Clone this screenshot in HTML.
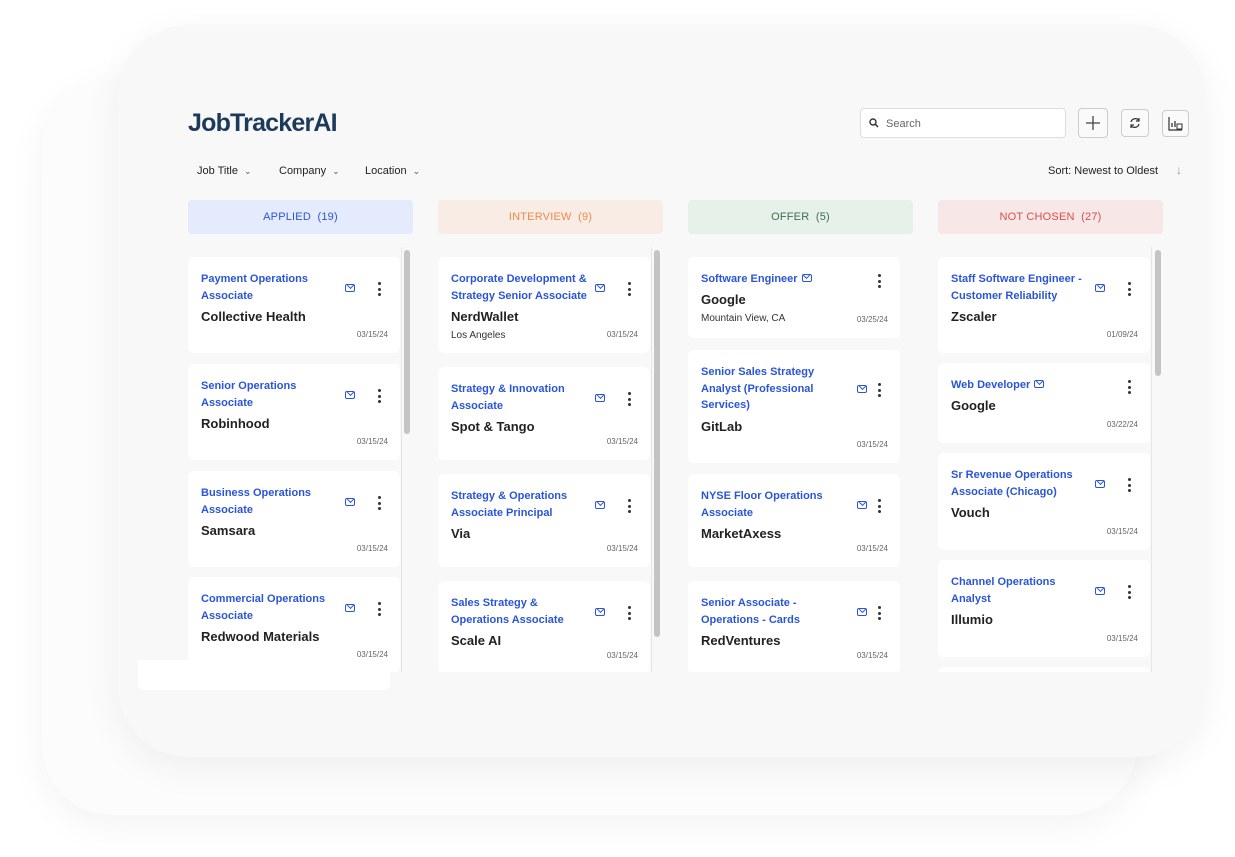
<!DOCTYPE html>
<html><head><meta charset="utf-8"><style>
*{box-sizing:border-box;margin:0;padding:0}
body{width:1235px;height:857px;background:#fff;font-family:"Liberation Sans",sans-serif;position:relative;overflow:hidden}
.back{position:absolute;left:42px;top:80px;width:1095px;height:735px;border-radius:70px;background:#fcfcfc;box-shadow:0 10px 40px rgba(0,0,0,.05)}
.front{position:absolute;left:118px;top:25px;width:1087px;height:732px;border-radius:70px;background:#f8f8f8;box-shadow:0 10px 40px rgba(0,0,0,.06);overflow:hidden}
.a{position:absolute}
.logo{left:188px;top:109px;font-size:25px;font-weight:bold;color:#1b3a5c;letter-spacing:-0.8px}
.filt{top:165px;font-size:11px;color:#222}
.filt span{font-size:9px;color:#555;margin-left:6px}
.search{left:860px;top:108px;width:206px;height:30px;border:1px solid #ddd;border-radius:4px;background:#fff;font-size:11px;color:#666;padding:9px 0 0 25px}
.btn{top:108px;width:30px;height:30px;border:1px solid #ccc;border-radius:4px;background:#fafafa}
.hdr{top:200px;width:225px;height:34px;border-radius:4px;font-size:11px;text-align:center;line-height:34px;letter-spacing:.2px}
.clip{position:absolute;left:0;top:0;width:1235px;height:672px;overflow:hidden}
.card{position:absolute;width:212px;background:#fff;border-radius:6px;padding:14px 0 0 13px}
.row{display:flex;align-items:center}
.t{font-size:11px;font-weight:bold;color:#2a55d9;line-height:16.5px;width:140px}
.ic{width:10px;height:8px;border:1.2px solid #2a55d9;border-radius:2px;position:relative;margin-left:3px;display:inline-block}
.ic:after{content:"";position:absolute;left:1.5px;top:-2px;width:4px;height:4px;border-right:1.2px solid #2a55d9;border-bottom:1.2px solid #2a55d9;transform:rotate(45deg)}
.dots{position:absolute;right:19px;width:3px}
.dots i{display:block;width:3px;height:3px;border-radius:50%;background:#333;margin-bottom:2.5px}
.c{font-size:13px;font-weight:bold;color:#222;margin-top:5px}
.l{font-size:10px;color:#333;margin-top:6px}
.d{position:absolute;right:12px;bottom:14px;font-size:8px;color:#666}
.sb{position:absolute;width:6px;border-radius:3px;background:#c4c4c4}
.trk{position:absolute;width:1px;background:#e6e6e6}
</style></head><body>
<div class="back"></div>
<div class="front"></div>
<div class="a" style="left:138px;top:660px;width:252px;height:30px;background:#fff;border-radius:0 0 6px 6px"></div>
<div class="a logo">JobTrackerAI</div>
<div class="a filt" style="left:197px">Job Title<span>&#8964;</span></div>
<div class="a filt" style="left:279px">Company<span>&#8964;</span></div>
<div class="a filt" style="left:365px">Location<span>&#8964;</span></div>
<div class="a filt" style="left:1048px">Sort: Newest to Oldest</div>
<div class="a" style="left:1176px;top:163px;font-size:12px;color:#999">&#8595;</div>
<div class="a search">Search</div>
<svg class="a" style="left:869px;top:118px" width="10" height="10" viewBox="0 0 10 10"><circle cx="4" cy="4" r="3" fill="none" stroke="#333" stroke-width="1.4"/><path d="M6.2 6.2L9 9" stroke="#333" stroke-width="1.5"/></svg>
<div class="a btn" style="left:1078px"><svg width="28" height="28"><path d="M14 7v14M7 14h14" stroke="#444" stroke-width="1.3"/></svg></div>
<div class="a btn" style="left:1121px;width:28px;height:28px;top:109px"><svg width="26" height="26"><path d="M9 12a4.5 4.5 0 0 1 8-1.5M17 14a4.5 4.5 0 0 1-8 1.5" fill="none" stroke="#333" stroke-width="1.3"/><path d="M17 8v3h-3M9 18v-3h3" fill="none" stroke="#333" stroke-width="1.2"/></svg></div>
<div class="a btn" style="left:1162px;width:27px;height:27px;top:110px"><svg width="25" height="25"><path d="M6 6v13h13" fill="none" stroke="#333" stroke-width="1.2"/><path d="M9 16v-4M12 16v-6" stroke="#333" stroke-width="1.3"/><rect x="14" y="13" width="5" height="5" fill="none" stroke="#333"/></svg></div>

<div class="a hdr" style="left:188px;background:#e3ebfc;color:#2a55d9">APPLIED &nbsp;(19)</div>
<div class="a hdr" style="left:438px;background:#f8ece4;color:#ef8a4e">INTERVIEW &nbsp;(9)</div>
<div class="a hdr" style="left:688px;background:#e6f1ea;color:#3e6e50">OFFER &nbsp;(5)</div>
<div class="a hdr" style="left:938px;background:#f7e7e6;color:#db4d4d">NOT CHOSEN &nbsp;(27)</div>

<div class="clip">
<div class="trk" style="left:401px;top:247px;height:430px"></div><div class="sb" style="left:404px;top:250px;height:184px"></div>
<div class="trk" style="left:651px;top:247px;height:430px"></div><div class="sb" style="left:654px;top:250px;height:387px"></div>
<div class="trk" style="left:1151px;top:247px;height:430px"></div><div class="sb" style="left:1155px;top:250px;height:126px"></div>

<div class="card" style="left:188px;top:257px;height:96px"><div class="row"><div class="t">Payment Operations Associate</div><span class="ic" style="margin-left:4px"></span></div><div class="dots" style="top:25px"><i></i><i></i><i></i></div><div class="c">Collective Health</div><div class="d">03/15/24</div></div>
<div class="card" style="left:188px;top:364px;height:96px"><div class="row"><div class="t">Senior Operations Associate</div><span class="ic" style="margin-left:4px"></span></div><div class="dots" style="top:25px"><i></i><i></i><i></i></div><div class="c">Robinhood</div><div class="d">03/15/24</div></div>
<div class="card" style="left:188px;top:471px;height:96px"><div class="row"><div class="t">Business Operations Associate</div><span class="ic" style="margin-left:4px"></span></div><div class="dots" style="top:25px"><i></i><i></i><i></i></div><div class="c">Samsara</div><div class="d">03/15/24</div></div>
<div class="card" style="left:188px;top:577px;height:96px"><div class="row"><div class="t">Commercial Operations Associate</div><span class="ic" style="margin-left:4px"></span></div><div class="dots" style="top:25px"><i></i><i></i><i></i></div><div class="c">Redwood Materials</div><div class="d">03/15/24</div></div>

<div class="card" style="left:438px;top:257px;height:96px"><div class="row"><div class="t">Corporate Development &amp; Strategy Senior Associate</div><span class="ic" style="margin-left:4px"></span></div><div class="dots" style="top:25px"><i></i><i></i><i></i></div><div class="c">NerdWallet</div><div class="l">Los Angeles</div><div class="d">03/15/24</div></div>
<div class="card" style="left:438px;top:367px;height:93px"><div class="row"><div class="t">Strategy &amp; Innovation Associate</div><span class="ic" style="margin-left:4px"></span></div><div class="dots" style="top:25px"><i></i><i></i><i></i></div><div class="c">Spot &amp; Tango</div><div class="d">03/15/24</div></div>
<div class="card" style="left:438px;top:474px;height:93px"><div class="row"><div class="t">Strategy &amp; Operations Associate Principal</div><span class="ic" style="margin-left:4px"></span></div><div class="dots" style="top:25px"><i></i><i></i><i></i></div><div class="c">Via</div><div class="d">03/15/24</div></div>
<div class="card" style="left:438px;top:581px;height:93px"><div class="row"><div class="t">Sales Strategy &amp; Operations Associate</div><span class="ic" style="margin-left:4px"></span></div><div class="dots" style="top:25px"><i></i><i></i><i></i></div><div class="c">Scale AI</div><div class="d">03/15/24</div></div>

<div class="card" style="left:688px;top:257px;height:81px"><div class="t" style="width:auto">Software Engineer <span class="ic" style="margin-left:1px"></span></div><div class="dots" style="top:17px"><i></i><i></i><i></i></div><div class="c" style="margin-top:4px">Google</div><div class="l">Mountain View, CA</div><div class="d">03/25/24</div></div>
<div class="card" style="left:688px;top:350px;height:113px"><div class="row"><div class="t">Senior Sales Strategy Analyst (Professional Services)</div><span class="ic" style="margin-left:16px"></span></div><div class="dots" style="top:33px"><i></i><i></i><i></i></div><div class="c">GitLab</div><div class="d">03/15/24</div></div>
<div class="card" style="left:688px;top:474px;height:93px"><div class="row"><div class="t">NYSE Floor Operations Associate</div><span class="ic" style="margin-left:16px"></span></div><div class="dots" style="top:25px"><i></i><i></i><i></i></div><div class="c">MarketAxess</div><div class="d">03/15/24</div></div>
<div class="card" style="left:688px;top:581px;height:93px"><div class="row"><div class="t">Senior Associate - Operations - Cards</div><span class="ic" style="margin-left:16px"></span></div><div class="dots" style="top:25px"><i></i><i></i><i></i></div><div class="c">RedVentures</div><div class="d">03/15/24</div></div>

<div class="card" style="left:938px;top:257px;height:96px"><div class="row"><div class="t">Staff Software Engineer - Customer Reliability</div><span class="ic" style="margin-left:4px"></span></div><div class="dots" style="top:25px"><i></i><i></i><i></i></div><div class="c">Zscaler</div><div class="d">01/09/24</div></div>
<div class="card" style="left:938px;top:363px;height:80px"><div class="t" style="width:auto">Web Developer <span class="ic" style="margin-left:1px"></span></div><div class="dots" style="top:17px"><i></i><i></i><i></i></div><div class="c" style="margin-top:4px">Google</div><div class="d">03/22/24</div></div>
<div class="card" style="left:938px;top:453px;height:97px"><div class="row"><div class="t">Sr Revenue Operations Associate (Chicago)</div><span class="ic" style="margin-left:4px"></span></div><div class="dots" style="top:25px"><i></i><i></i><i></i></div><div class="c">Vouch</div><div class="d">03/15/24</div></div>
<div class="card" style="left:938px;top:560px;height:97px"><div class="row"><div class="t">Channel Operations Analyst</div><span class="ic" style="margin-left:4px"></span></div><div class="dots" style="top:25px"><i></i><i></i><i></i></div><div class="c">Illumio</div><div class="d">03/15/24</div></div>
<div class="card" style="left:938px;top:667px;height:40px"></div>
</div>
</body></html>
